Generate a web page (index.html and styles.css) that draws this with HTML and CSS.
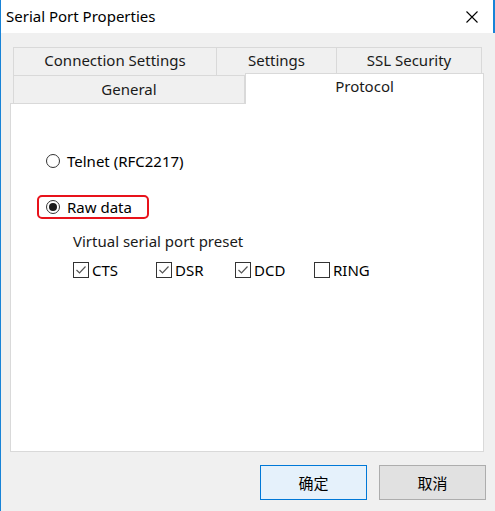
FILE: index.html
```html
<!DOCTYPE html>
<html>
<head>
    <title>Serial Port Properties</title>
    <meta charset="utf-8">
    <link rel="stylesheet" href="styles.css">
</head>
<body>
    <div class="window">
        <div class="titlebar">
            <span class="title">Serial Port Properties</span>
            <svg class="close" width="12" height="12" viewBox="0 0 12 12">
                <path d="M0.5 0.5 L11.5 11.5 M11.5 0.5 L0.5 11.5" stroke="#000" stroke-width="1.1" fill="none"/>
            </svg>
        </div>

        <div class="content">
            <div class="tabs">
                <div class="tab-row back">
                    <div class="tab tab-conn">Connection Settings</div>
                    <div class="tab tab-settings">Settings</div>
                    <div class="tab tab-ssl">SSL Security</div>
                </div>
                <div class="tab-row front">
                    <div class="tab tab-general">General</div>
                    <div class="tab tab-protocol active">Protocol</div>
                </div>
            </div>

            <div class="panel">
                <label class="option">
                    <span class="radio"></span>
                    <span>Telnet (RFC2217)</span>
                </label>
                <label class="option highlight">
                    <span class="radio checked"></span>
                    <span>Raw data</span>
                </label>

                <div class="preset">
                    <div class="preset-title">Virtual serial port preset</div>
                    <div class="checks">
                        <label class="check c-cts">
                            <svg class="box" width="16" height="16" viewBox="0 0 16 16">
                                <rect x="0.5" y="0.5" width="15" height="15" fill="#fff" stroke="#333"/>
                                <path d="M3.5 8 L6.5 11 L12.5 4.5" stroke="#555" stroke-width="1.2" fill="none"/>
                            </svg>
                            <span>CTS</span>
                        </label>
                        <label class="check c-dsr">
                            <svg class="box" width="16" height="16" viewBox="0 0 16 16">
                                <rect x="0.5" y="0.5" width="15" height="15" fill="#fff" stroke="#333"/>
                                <path d="M3.5 8 L6.5 11 L12.5 4.5" stroke="#555" stroke-width="1.2" fill="none"/>
                            </svg>
                            <span>DSR</span>
                        </label>
                        <label class="check c-dcd">
                            <svg class="box" width="16" height="16" viewBox="0 0 16 16">
                                <rect x="0.5" y="0.5" width="15" height="15" fill="#fff" stroke="#333"/>
                                <path d="M3.5 8 L6.5 11 L12.5 4.5" stroke="#555" stroke-width="1.2" fill="none"/>
                            </svg>
                            <span>DCD</span>
                        </label>
                        <label class="check">
                            <svg class="box" width="16" height="16" viewBox="0 0 16 16">
                                <rect x="0.5" y="0.5" width="15" height="15" fill="#fff" stroke="#333"/>
                            </svg>
                            <span>RING</span>
                        </label>
                    </div>
                </div>
            </div>

            <div class="buttons">
                <button class="btn primary">确定</button>
                <button class="btn">取消</button>
            </div>
        </div>
    </div>
</body>
</html>
```

FILE: styles.css
```css
html, body {
    margin: 0;
    padding: 0;
}
body {
    font-family: "Noto Sans", "Noto Sans CJK SC", sans-serif;
    font-size: 15px;
    color: #000;
    background: #f0f0f0;
}
.window {
    width: 495px;
    height: 511px;
    box-sizing: border-box;
    border-left: 1px solid #1883d7;
    background: #f0f0f0;
    display: flex;
    flex-direction: column;
}
.titlebar {
    height: 33px;
    background: #fff;
    border-right: 2px solid #1883d7;
    display: flex;
    align-items: center;
    justify-content: space-between;
    padding: 0 15px 0 5px;
}
.title {
    font-size: 15px;
    margin-top: -1px;
}
.close {
    display: block;
}
.content {
    padding: 14px 0 0 9px;
}
.tabs {
    padding-left: 3px;
}
.tab-row {
    display: flex;
}
.tab {
    box-sizing: border-box;
    border: 1px solid #d9d9d9;
    background: #f0f0f0;
    text-align: center;
    color: #1a1a1a;
}
.back .tab {
    height: 28px;
    line-height: 25px;
    border-bottom: none;
}
.back .tab + .tab {
    border-left: none;
}
.tab-conn { width: 204px; }
.tab-settings { width: 120px; }
.tab-ssl { width: 145px; }
.front {
    height: 28px;
    align-items: flex-end;
}
.front .tab {
    height: 28px;
    line-height: 26px;
}
.tab-general {
    width: 232px;
    border-bottom: none;
}
.tab-protocol.active {
    width: 239px;
    height: 31px;
    margin-bottom: -1px;
    position: relative;
    z-index: 1;
    background: #fff;
    border-bottom: none;
    line-height: 24px;
}
.panel {
    width: 474px;
    height: 349px;
    box-sizing: border-box;
    background: #fff;
    border: 1px solid #d9d9d9;
    padding: 45px 0 0 26px;
}
.option {
    display: flex;
    align-items: center;
    width: 112px;
    height: 24px;
    box-sizing: border-box;
    border: 2px solid transparent;
    border-radius: 5px;
    padding-left: 7px;
    white-space: nowrap;
}
.option + .option {
    margin-top: 22px;
}
.option.highlight {
    border-color: #e8121b;
}
.radio {
    width: 14px;
    height: 14px;
    box-sizing: border-box;
    border: 1px solid #333;
    border-radius: 50%;
    background: #fff;
    margin-right: 7px;
    flex: none;
    display: flex;
    align-items: center;
    justify-content: center;
}
.radio.checked::after {
    content: "";
    width: 8px;
    height: 8px;
    border-radius: 50%;
    background: #1a1a1a;
}
.preset {
    margin: 12px 0 0 36px;
}
.preset-title {
    line-height: 20px;
    color: #1a1a1a;
}
.checks {
    display: flex;
    margin-top: 9px;
}
.check {
    display: flex;
    align-items: center;
    height: 20px;
}
.check .box {
    margin-right: 3px;
    flex: none;
}
.c-cts { width: 83px; }
.c-dsr { width: 79px; }
.c-dcd { width: 79px; }
.buttons {
    display: flex;
    justify-content: flex-end;
    gap: 12px;
    margin-top: 13px;
    padding-right: 9px;
}
.btn {
    width: 107px;
    height: 35px;
    box-sizing: border-box;
    font-family: "Noto Sans CJK SC", sans-serif;
    font-size: 15px;
    color: #000;
    background: #e1e1e1;
    border: 1px solid #adadad;
    padding: 0;
}
.btn.primary {
    background: #e5f1fb;
    border: 1px solid #0078d7;
}
```
